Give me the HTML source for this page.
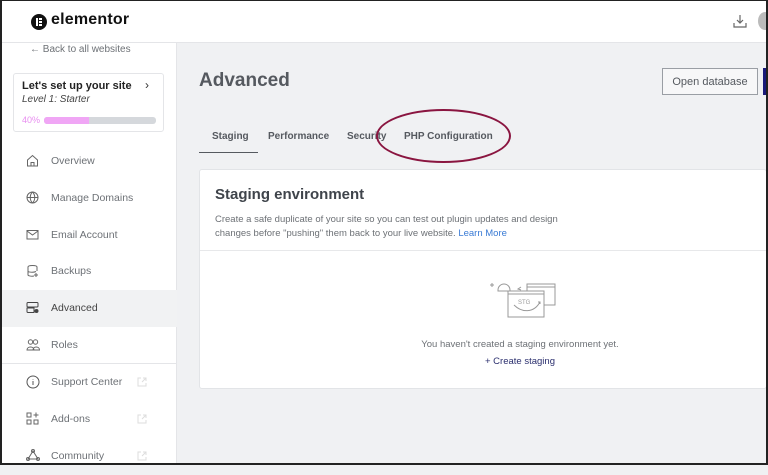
<!DOCTYPE html>
<html><head><meta charset="utf-8"><style>
*{margin:0;padding:0;box-sizing:border-box}
body{width:768px;height:465px;overflow:hidden;font-family:"Liberation Sans",sans-serif;background:#f0f1f3;position:relative;color:#3f444b}
.frame{position:absolute;left:0;top:0;width:768px;height:465px;border:2px solid #222;border-top:1px solid #222;pointer-events:none;z-index:10}
.hdr{position:absolute;left:0;top:0;width:768px;height:43px;background:#fff;border-bottom:1px solid #e4e5e8}
.logo{position:absolute;left:31px;top:14px;width:16px;height:16px;border-radius:50%;background:#111}
.logo i{position:absolute;background:#fff}
.logotxt{position:absolute;left:51px;top:11px;font-size:16px;font-weight:bold;color:#111;letter-spacing:.2px}
.side{position:absolute;left:0;top:43px;width:177px;height:422px;background:#fff;border-right:1px solid #e4e5e8}
.back{position:absolute;left:30px;top:44px;font-size:10px;color:#6d7176}
.setup{position:absolute;left:13px;top:73px;width:151px;height:59px;border:1px solid #e4e5e8;border-radius:3px;background:#fff}
.setup b{position:absolute;left:8px;top:6px;font-size:11px;color:#222}
.setup em{position:absolute;left:8px;top:20px;font-size:10px;color:#444}
.setup .pc{position:absolute;left:8px;top:41px;font-size:9px;color:#e88ef0}
.bar{position:absolute;left:30px;top:43px;width:112px;height:7px;border-radius:3px;background:#d5d8dc}
.bar i{position:absolute;left:0;top:0;width:45px;height:7px;border-radius:3px 0 0 3px;background:#f0a6f5}
.nav{position:absolute;left:0;width:177px;height:37px;font-size:10.5px;color:#6d7176}
.nav span{position:absolute;left:51px;top:12px}
.nav svg{position:absolute;left:26px;top:11px}
.nav .ext{position:absolute;left:137px;top:13px}
.act{background:#f1f2f3;border-left:2px solid #333}
h1{position:absolute;left:199px;top:70px;font-size:19px;font-weight:bold;color:#55595f}
.btn{position:absolute;left:662px;top:68px;width:96px;height:27px;border:1px solid #9a9ea4;font-size:11px;color:#55595f;text-align:center;line-height:27px;background:#f7f7f8}
.blue{position:absolute;left:763px;top:68px;width:4px;height:27px;background:#1a1a7a}
.tab{position:absolute;top:131px;font-size:10px;font-weight:bold;color:#55595f}
.ul{position:absolute;left:199px;top:152px;width:59px;height:1px;background:#55595f}
.card{position:absolute;left:199px;top:169px;width:568px;height:220px;background:#fff;border:1px solid #e2e4e7;border-radius:3px}
.card h2{position:absolute;left:15px;top:16px;font-size:15px;font-weight:bold;color:#3f444b}
.card p{position:absolute;left:15px;top:43px;font-size:9.5px;line-height:14px;color:#6d7176;width:370px}
.card p a{color:#3a7bd5}
.div{position:absolute;left:0;top:80px;width:568px;height:1px;background:#e7e8ea}
.empty{position:absolute;text-align:center;font-size:9.5px;color:#6d7176}
.create{position:absolute;text-align:center;font-size:9.5px;color:#2b2f6e}
.oval{position:absolute;left:376px;top:109px;width:135px;height:54px;border:2.5px solid #8a1540;border-radius:50%}
</style></head><body>
<div class="hdr">
<div class="logo"><i style="left:5px;top:4px;width:2px;height:8px"></i><i style="left:8px;top:4px;width:3px;height:2px"></i><i style="left:8px;top:7px;width:3px;height:2px"></i><i style="left:8px;top:10px;width:3px;height:2px"></i></div>
<div class="logotxt">elementor</div>
<svg style="position:absolute;left:733px;top:14px" width="14" height="14" viewBox="0 0 14 14" fill="none" stroke="#666" stroke-width="1.2"><path d="M7 1v8M4 6l3 3 3-3M1 9v4h12V9"/></svg>
<div style="position:absolute;left:758px;top:12px;width:14px;height:18px;border-radius:50%;background:#bbb"></div>
</div>
<div class="side"></div>
<div class="back">← Back to all websites</div>
<div class="setup"><b>Let's set up your site</b><span style="position:absolute;left:131px;top:4px;font-size:12px;color:#333">›</span><em>Level 1: Starter</em><span class="pc">40%</span><div class="bar"><i></i></div></div>
<div class="nav" style="top:143px"><svg width="13" height="13" viewBox="0 0 13 13" fill="none" stroke="#666"><path d="M1.5 6L6.5 1.5 11.5 6V12H1.5Z M5 12V8.5h3V12"/></svg><span>Overview</span></div>
<div class="nav" style="top:180px"><svg width="13" height="13" viewBox="0 0 13 13" fill="none" stroke="#666"><circle cx="6.5" cy="6.5" r="5.5"/><path d="M1 6.5h11M6.5 1c-3 3-3 8 0 11M6.5 1c3 3 3 8 0 11"/></svg><span>Manage Domains</span></div>
<div class="nav" style="top:217px"><svg width="13" height="13" viewBox="0 0 13 13" fill="none" stroke="#666"><rect x="1" y="2.5" width="11" height="8.5"/><path d="M1 3l5.5 4L12 3"/></svg><span>Email Account</span></div>
<div class="nav" style="top:253px"><svg width="13" height="13" viewBox="0 0 13 13" fill="none" stroke="#666"><path d="M2 3c0-2 9-2 9 0v4M2 3v8c0 1 4 1.5 6 1M2 7c0 1.5 6 1.5 8 .5M10 9v4M8 11h4"/></svg><span>Backups</span></div>
<div class="nav act" style="top:290px"><svg width="13" height="13" viewBox="0 0 13 13" fill="none" stroke="#444" style="left:24px"><rect x="1" y="1.5" width="11" height="4.5" rx="1"/><path d="M1 7h7v4.5H2a1 1 0 0 1-1-1Z"/><circle cx="10.5" cy="10" r="1.5" fill="#444"/></svg><span style="left:49px;color:#444">Advanced</span></div>
<div class="nav" style="top:327px"><svg width="14" height="13" viewBox="0 0 14 13" fill="none" stroke="#666"><circle cx="4.5" cy="4" r="2.2"/><circle cx="9.5" cy="4" r="2.2"/><path d="M1 12c0-4 7-4 7 0ZM7 12c0-4 6.5-4 6.5 0Z"/></svg><span>Roles</span></div>
<div style="position:absolute;left:2px;top:363px;width:175px;height:1px;background:#e4e5e8"></div>
<div class="nav" style="top:364px"><svg width="14" height="14" viewBox="0 0 14 14" fill="none" stroke="#555"><circle cx="7" cy="7" r="6"/><path d="M7 6v4M7 4v.5"/></svg><span>Support Center</span><svg class="ext" width="10" height="10" viewBox="0 0 10 10" fill="none" stroke="#ddd"><path d="M4 1H1v8h8V6M5 5l4-4M6 1h3v3"/></svg></div>
<div class="nav" style="top:401px"><svg width="13" height="13" viewBox="0 0 13 13" fill="none" stroke="#666"><rect x="1" y="1" width="4" height="4"/><rect x="1" y="8" width="4" height="4"/><rect x="8" y="8" width="4" height="4"/><path d="M10 0.5v5M7.5 3h5"/></svg><span>Add-ons</span><svg class="ext" width="10" height="10" viewBox="0 0 10 10" fill="none" stroke="#ddd"><path d="M4 1H1v8h8V6M5 5l4-4M6 1h3v3"/></svg></div>
<div class="nav" style="top:438px"><svg width="14" height="13" viewBox="0 0 14 13" fill="none" stroke="#666"><path d="M7 2L2 10h10Z"/><circle cx="7" cy="2" r="1.5"/><circle cx="2" cy="10" r="1.5"/><circle cx="12" cy="10" r="1.5"/></svg><span>Community</span><svg class="ext" width="10" height="10" viewBox="0 0 10 10" fill="none" stroke="#ddd"><path d="M4 1H1v8h8V6M5 5l4-4M6 1h3v3"/></svg></div>
<h1>Advanced</h1>
<div class="btn">Open database</div><div class="blue"></div>
<div class="tab" style="left:212px">Staging</div>
<div class="tab" style="left:268px">Performance</div>
<div class="tab" style="left:347px">Security</div>
<div class="tab" style="left:404px">PHP Configuration</div>
<div class="ul"></div>
<div class="card"><h2>Staging environment</h2>
<p>Create a safe duplicate of your site so you can test out plugin updates and design changes before "pushing" them back to your live website. <a>Learn More</a></p>
<div class="div"></div>
<svg style="position:absolute;left:288px;top:110px" width="70" height="40" viewBox="0 0 70 40" fill="none" stroke="#999" stroke-width="1"><path d="M2 5h4M4 3v4"/><path d="M10 10a6 6 0 0 1 12 0v1H10Z"/><rect x="39" y="4" width="28" height="21"/><path d="M39 7h28"/><rect x="20" y="11" width="36" height="26" fill="#fff"/><path d="M20 14h36"/><path d="M26 25c8 8 20 8 26-3M50 22l2 0 0 2"/><path d="M33 7l-3 2 3 1"/><text x="30" y="24" font-size="6" fill="#999" stroke="none" font-family="Liberation Sans">STG</text></svg>
</div>
<div class="empty" style="left:200px;width:640px;top:339px">You haven't created a staging environment yet.</div>
<div class="create" style="left:200px;width:640px;top:356px">+ Create staging</div>
<div class="oval"></div>
<div class="frame"></div>
</body></html>
